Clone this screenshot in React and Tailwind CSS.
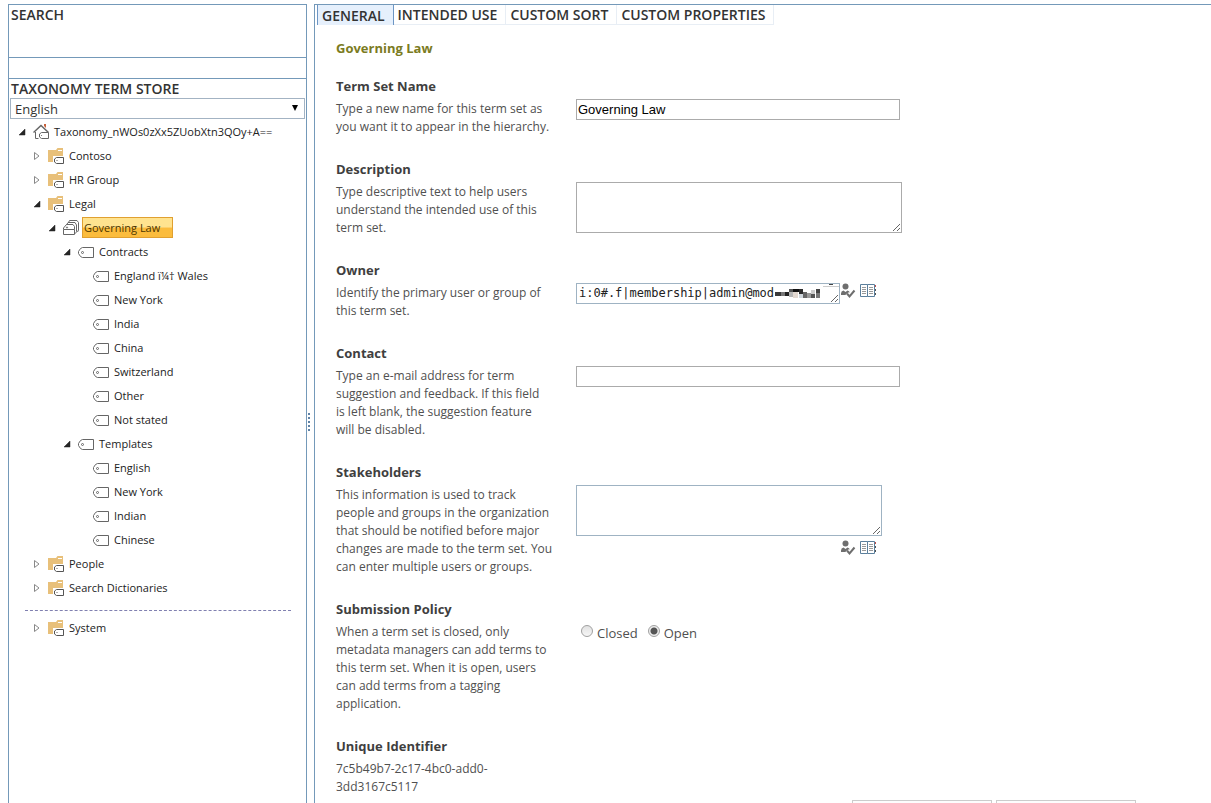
import { useState } from 'react'
import clsx from 'clsx'

const TERMS = [
  { name: 'Contoso', icon: 'group', open: false },
  { name: 'HR Group', icon: 'group', open: false },
  {
    name: 'Legal',
    icon: 'group',
    open: true,
    children: [
      {
        name: 'Governing Law',
        icon: 'set',
        open: true,
        selected: true,
        children: [
          {
            name: 'Contracts',
            icon: 'term',
            open: true,
            children: [
              { name: 'England ï¼† Wales', icon: 'term' },
              { name: 'New York', icon: 'term' },
              { name: 'India', icon: 'term' },
              { name: 'China', icon: 'term' },
              { name: 'Switzerland', icon: 'term' },
              { name: 'Other', icon: 'term' },
              { name: 'Not stated', icon: 'term' },
            ],
          },
          {
            name: 'Templates',
            icon: 'term',
            open: true,
            children: [
              { name: 'English', icon: 'term' },
              { name: 'New York', icon: 'term' },
              { name: 'Indian', icon: 'term' },
              { name: 'Chinese', icon: 'term' },
            ],
          },
        ],
      },
    ],
  },
  { name: 'People', icon: 'group', open: false },
  { name: 'Search Dictionaries', icon: 'group', open: false },
]

const ROOT = { name: 'Taxonomy_nWOs0zXx5ZUobXtn3QOy+A==', icon: 'store', open: true, children: TERMS }
const SYSTEM = { name: 'System', icon: 'group', open: false }

const TABS = ['GENERAL', 'INTENDED USE', 'CUSTOM SORT', 'CUSTOM PROPERTIES']

// grey blocks that hide the tenant name: x, y, width, height, fill
const MASK = [
  [0, 3, 6, 4, '#3a3a3a'],
  [6, 3, 4, 4, '#777'],
  [10, 3, 4, 4, '#222'],
  [14, 3, 4, 5, '#b5b5b5'],
  [14, 0, 4, 3, '#555'],
  [18, 0, 6, 3, '#111'],
  [18, 3, 5, 6, '#e2d8d0'],
  [24, 0, 4, 5, '#2c2c2c'],
  [24, 5, 4, 4, '#cfd6dc'],
  [28, 3, 4, 6, '#666'],
  [32, 4, 4, 5, '#999'],
  [36, 1, 4, 4, '#ccc'],
  [36, 5, 4, 4, '#555'],
  [41, 0, 4, 4, '#444'],
  [41, 4, 4, 5, '#777'],
]

function NodeIcon({ type }) {
  if (type === 'term') {
    return (
      <svg width="17" height="18" viewBox="0 -2 17 18" fill="none" stroke="#666" aria-hidden="true">
        <path d="M4.5 3.5H15.5V13.5H4.5L2.5 12.5L.5 9.5V7.5L2.5 4.5Z" />
        <circle cx="4.5" cy="8.5" r="1" />
      </svg>
    )
  }
  if (type === 'set') {
    return (
      <svg width="17" height="18" viewBox="0 -2 17 18" fill="none" stroke="#666" aria-hidden="true">
        <path d="M5.5 2.5L6.5 .5H14L15.5 2.5V10L14.5 12" />
        <path d="M3.5 5L5 2.5H12L13.5 5V11.5L12.5 13.5" />
        <path d="M.5 9.5V8L3.5 4.5H10L11.5 6.5V9.5" />
        <path d="M.5 9.5H11.5V14.5H.5Z" />
        <circle cx="4" cy="7.5" r=".6" />
      </svg>
    )
  }
  if (type === 'store') {
    return (
      <svg width="17" height="18" viewBox="0 -2 17 18" fill="none" aria-hidden="true">
        <path d="M11 0h2v4l-2-2z" fill="#c8603a" />
        <path d="M.5 8.5L8 1.5L15.5 8.5" stroke="#666" strokeWidth="1.5" />
        <path d="M2.5 8V14.5H5.5" stroke="#666" />
        <path d="M8.5 8.5H15.5V14.5H8.5L6.5 13V10Z" fill="#fff" stroke="#666" />
        <circle cx="8.5" cy="11.5" r=".6" fill="#666" />
      </svg>
    )
  }
  return (
    <svg width="17" height="18" viewBox="0 -2 17 18" fill="none" aria-hidden="true">
      <path d="M0 2H8L9.5 0H15V14H0Z" fill="#e8c07a" />
      <path d="M10 2.5H14" stroke="#fff" />
      <path d="M5 8H17V16H5Z" fill="#fff" />
      <path d="M8.5 9.5H15.5V15.5H8.5L6.5 14V11Z" fill="#fff" stroke="#555" />
      <circle cx="9" cy="12.5" r=".6" fill="#555" />
    </svg>
  )
}

function Toggle({ open, onClick, name }) {
  return (
    <button type="button" onClick={onClick} aria-label={name} aria-expanded={open} className="flex w-3.5 shrink-0 items-center">
      <svg width="8" height="12" viewBox="0 -2 8 12" aria-hidden="true">
        {open ? (
          <path d="M6 2V8H0Z" fill="#262626" stroke="#262626" strokeWidth=".5" />
        ) : (
          <path d="M.5 1.5L5 5L.5 8.5Z" fill="none" stroke="#888" />
        )}
      </svg>
    </button>
  )
}

function TreeNode({ node }) {
  const [open, setOpen] = useState(node.open)
  return (
    <li>
      <div className="flex h-6 items-center">
        {node.open === undefined ? (
          <span className="w-3.5 shrink-0" />
        ) : (
          <Toggle open={open} name={node.name} onClick={() => setOpen(!open)} />
        )}
        <NodeIcon type={node.icon} />
        <a
          href="#"
          className={clsx(
            'ml-0.5 whitespace-nowrap border pl-px text-[11px] leading-[19px]',
            node.selected
              ? 'border-[#e0a030] bg-linear-to-b from-[#ffe38f] from-45% to-[#fbbc3d] to-55% pr-3 text-[#4a3500]'
              : 'border-transparent text-[#222]',
          )}
        >
          {node.name}
        </a>
      </div>
      {open && node.children && (
        <ul className="pl-[15px]">
          {node.children.map((child) => (
            <TreeNode key={child.name} node={child} />
          ))}
        </ul>
      )}
    </li>
  )
}

function Field({ id, title, text, children }) {
  return (
    <div className="mb-[23px] flex">
      <div className="w-60 shrink-0 pr-[22px]">
        <label htmlFor={id} className="block text-[13px] font-bold leading-5 text-[#3f3f3f]">
          {title}
        </label>
        <p className="mt-1 text-xs leading-[18px] text-[#505050]">{text}</p>
      </div>
      <div className="mt-[23px]">{children}</div>
    </div>
  )
}

function PeopleButtons() {
  return (
    <div className="flex items-center gap-1">
      <button type="button" aria-label="Check names">
        <svg width="16" height="16" viewBox="0 0 16 16" fill="none" aria-hidden="true">
          <circle cx="5.5" cy="3.5" r="3" fill="#6e6e6e" />
          <path d="M1 12V10.5Q1 8 3.5 7.5L5.5 9L7.5 7.5Q9.5 8 9.5 9L8 12Z" fill="#6e6e6e" />
          <path d="M7 10.5L9.5 13.5L14.5 7.5" stroke="#fff" strokeWidth="4" />
          <path d="M7 10.5L9.5 13.5L14.5 7.5" stroke="#6e6e6e" strokeWidth="2" />
        </svg>
      </button>
      <button type="button" aria-label="Browse">
        <svg width="16" height="16" viewBox="0 0 16 16" fill="none" aria-hidden="true">
          <path d="M7.5 1.5H.5V13.5H7.5M7.5 1.5V13.5M7.5 1.5H14.5V13.5H7.5" stroke="#5b7f9c" />
          <path d="M2 4.5H6M2 6.5H6M2 8.5H6M2 10.5H6M9 4.5H13M9 6.5H13M9 8.5H13M9 10.5H13" stroke="#999" />
          <path d="M15.5 2V4" stroke="#c0504d" />
          <path d="M15.5 6V8M15.5 10V12" stroke="#555" />
        </svg>
      </button>
    </div>
  )
}

function Sidebar() {
  return (
    <aside className="flex w-[299px] shrink-0 flex-col border border-b-0 border-[#7499b9]">
      <h2 className="h-[53px] border-b border-[#7499b9] pl-0.5 text-sm font-semibold leading-5 text-[#333]">SEARCH</h2>
      <div className="mt-5 flex-1 border-t border-[#7499b9]">
        <h2 className="pl-0.5 text-sm font-semibold leading-[19px] text-[#333]">
          <label htmlFor="language">TAXONOMY TERM STORE</label>
        </h2>
        <div className="relative mx-px">
          <select
            id="language"
            className="block h-[21px] w-full appearance-none border border-[#a3b3c3] bg-white pl-1 text-[13px] leading-[18px] text-[#333]"
          >
            <option>English</option>
          </select>
          <svg width="8" height="6" viewBox="0 0 8 6" className="pointer-events-none absolute right-1.5 top-[7px]" aria-hidden="true">
            <path d="M1 0H7L4 6Z" fill="#000" />
          </svg>
        </div>
        <ul className="pl-2.5">
          <TreeNode node={ROOT} />
        </ul>
        <hr className="ml-4 mr-[15px] mt-[11px] border-dashed border-[#8080b0]" />
        <ul className="mt-1 pl-[25px]">
          <TreeNode node={SYSTEM} />
        </ul>
      </div>
    </aside>
  )
}

export default function App() {
  const [tab, setTab] = useState('GENERAL')
  const [policy, setPolicy] = useState('Open')

  return (
    <div className="flex h-screen overflow-hidden bg-white pl-2 pt-1 font-['Open_Sans','Noto_Sans',sans-serif]">
      <Sidebar />

      {/* Splitter */}
      <div className="flex w-[7px] shrink-0 flex-col items-center gap-0.5 pt-[409px] pr-[3px]">
        {[0, 1, 2, 3, 4].map((i) => (
          <span key={i} className="size-0.5 shrink-0 bg-[#5f82a6]" />
        ))}
      </div>

      <main className="min-w-0 flex-1 border-l border-t border-[#7499b9]">
        <div className="flex pl-0.5" role="tablist">
          {TABS.map((t) => (
            <button
              key={t}
              type="button"
              role="tab"
              aria-selected={t === tab}
              onClick={() => setTab(t)}
              className={clsx(
                'whitespace-nowrap border-r pl-1 pr-2 text-sm font-semibold leading-[19px] text-[#333]',
                t === tab ? 'border-l border-[#6d96c4] bg-[#e6f0fc]' : 'border-b border-[#e8eef5]',
              )}
            >
              {t}
            </button>
          ))}
        </div>

        <form className="pl-[21px]">
          <h1 className="mb-[18px] mt-[13px] text-[13px] font-bold leading-5 text-[#7b7b22]">Governing Law</h1>

          <Field id="name" title="Term Set Name" text="Type a new name for this term set as you want it to appear in the hierarchy.">
            <input
              id="name"
              defaultValue="Governing Law"
              className="block h-[21px] w-[324px] border border-[#ababab] px-px font-['Liberation_Sans',sans-serif] text-[13px] text-black"
            />
          </Field>

          <Field id="description" title="Description" text="Type descriptive text to help users understand the intended use of this term set.">
            <textarea id="description" className="block h-[51px] w-[326px] border border-[#ababab]" />
          </Field>

          <Field id="owner" title="Owner" text="Identify the primary user or group of this term set.">
            <div className="flex items-start">
              <div className="relative">
                <textarea
                  id="owner"
                  rows={1}
                  defaultValue="i:0#.f|membership|admin@mod"
                  className="block h-[21px] w-[264px] overflow-hidden border border-[#9fb3c3] px-0.5 font-['DejaVu_Sans_Mono',monospace] text-xs leading-[19px] text-[#222]"
                />
                <svg width="45" height="9" viewBox="0 0 45 9" className="absolute left-[199px] top-1.5" aria-hidden="true">
                  {MASK.map(([x, y, w, h, fill]) => (
                    <rect key={`${x}-${y}`} x={x} y={y} width={w} height={h} fill={fill} />
                  ))}
                </svg>
                <svg width="16" height="3" viewBox="0 0 16 3" className="absolute right-px top-px" aria-hidden="true">
                  <path d="M0 2.5H16" stroke="#ccc" />
                  <path d="M6 .5H10" stroke="#444" />
                </svg>
              </div>
              <PeopleButtons />
            </div>
          </Field>

          <Field
            id="contact"
            title="Contact"
            text={'Type an e-mail address for term suggestion and feedback. If this field is\u00a0left blank, the suggestion feature will\u00a0be disabled.'}
          >
            <input id="contact" className="block h-[21px] w-[324px] border border-[#ababab] px-px" />
          </Field>

          <Field
            id="stakeholders"
            title="Stakeholders"
            text="This information is used to track people and groups in the organization that should be notified before major changes are made to the term set. You can enter multiple users or groups."
          >
            <textarea id="stakeholders" className="mb-1 block h-[51px] w-[306px] border border-[#9fb3c3]" />
            <div className="flex justify-end pr-1.5">
              <PeopleButtons />
            </div>
          </Field>

          <Field
            id="policy-Closed"
            title="Submission Policy"
            text="When a term set is closed, only metadata managers can add terms to this term set. When it is open, users can add terms from a tagging application."
          >
            <div className="flex gap-2.5 pl-[5px]">
              {['Closed', 'Open'].map((p) => (
                <label key={p} className="flex gap-1 text-[13px] leading-[22px] text-[#505050]">
                  <input
                    type="radio"
                    id={`policy-${p}`}
                    name="policy"
                    checked={policy === p}
                    onChange={() => setPolicy(p)}
                    className="mt-[3px] size-3 appearance-none rounded-full border border-[#a0a0a0] bg-linear-to-b from-[#e2e2e2] to-[#f6f6f6] checked:bg-[radial-gradient(circle,#555_3px,#eee_4px)]"
                  />
                  {p}
                </label>
              ))}
            </div>
          </Field>

          <div className="w-60 pr-[22px]">
            <h3 className="text-[13px] font-bold leading-5 text-[#3f3f3f]">Unique Identifier</h3>
            <p className="mt-1 text-xs leading-[18px] text-[#505050]">7c5b49b7-2c17-4bc0-add0-3dd3167c5117</p>
          </div>

          <div className="mt-1 flex justify-end gap-1 pr-[75px]">
            <button type="submit" aria-label="Save" className="h-7 w-[140px] border border-[#ccc] bg-[#fdfdfd]" />
            <button type="button" aria-label="Cancel" className="h-7 w-[140px] border border-[#ccc] bg-[#fdfdfd]" />
          </div>
        </form>
      </main>
    </div>
  )
}
